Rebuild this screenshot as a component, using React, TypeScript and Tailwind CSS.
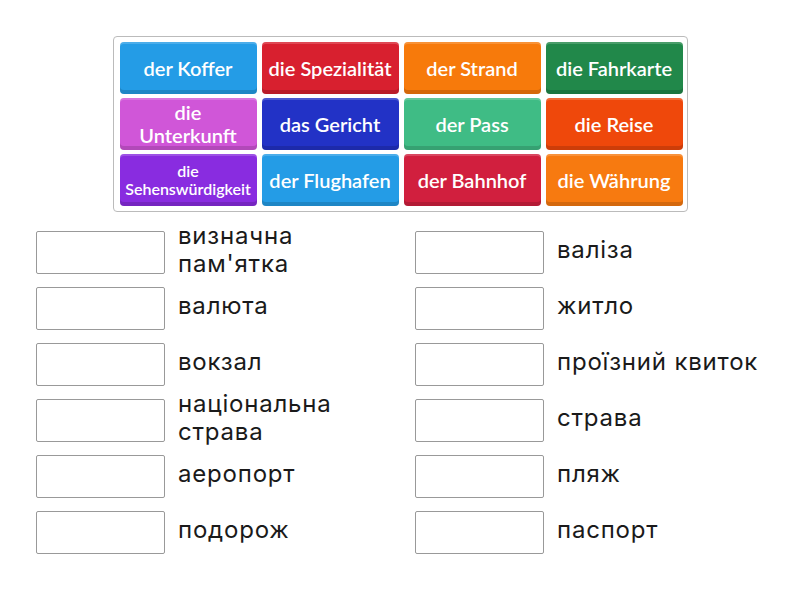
const tiles = [
    { text: "der Koffer", cls: "bg-[#249ce6]" },
    { text: "die Spezialität", cls: "bg-[#d8202f]" },
    { text: "der Strand", cls: "bg-[#f77a0b]" },
    { text: "die Fahrkarte", cls: "bg-[#21884a]" },
    { text: "die Unterkunft", cls: "bg-[#d056d8]", two: true },
    { text: "das Gericht", cls: "bg-[#2232c6]" },
    { text: "der Pass", cls: "bg-[#3fbc85]" },
    { text: "die Reise", cls: "bg-[#ef480b]" },
    { text: "die Sehenswürdigkeit", cls: "bg-[#892ce0]", small: true },
    { text: "der Flughafen", cls: "bg-[#249ce6]" },
    { text: "der Bahnhof", cls: "bg-[#d11f3e]" },
    { text: "die Währung", cls: "bg-[#f77a10]" },
];

const left = ["визначна пам'ятка", "валюта", "вокзал", "національна страва", "аеропорт", "подорож"];
const right = ["валіза", "житло", "проїзний квиток", "страва", "пляж", "паспорт"];

function Tile({ text, cls, two, small }: { text: string; cls: string; two?: boolean; small?: boolean }) {
    return (
        <div
            className={`${cls} h-[52px] rounded-[4px] flex items-center justify-center text-center text-white px-0.5 shadow-[inset_0_-4px_0_rgba(0,0,0,0.14),inset_0_2px_0_rgba(255,255,255,0.18)]`}
        >
            {small ? (
                <span className="text-[16px] leading-[18px] font-semibold">
                    die<br />Sehenswürdigkeit
                </span>
            ) : two ? (
                <span className="text-[20px] leading-[23px] font-semibold">
                    die<br />Unterkunft
                </span>
            ) : (
                <span className="text-[20px] leading-[24px] font-semibold whitespace-nowrap">{text}</span>
            )}
        </div>
    );
}

function Row({ label }: { label: string }) {
    return (
        <div className="flex items-center h-[43px]">
            <div className="w-[129px] h-[43px] border border-[#999] rounded-[2px] bg-white shrink-0" />
            <div className="ml-[13px] text-[24px] leading-[28px] tracking-[0.8px] text-[#1a1a1a] w-[220px] pb-[6px] shrink-0">
                {label}
            </div>
        </div>
    );
}

export default function App() {
    return (
        <div className="w-[800px] h-[600px] bg-white" style={{ fontFamily: "Inter, 'Noto Sans', sans-serif" }}>
            <div className="pt-[36px] flex justify-center">
                <div
                    className="w-[575px] border border-[#bbb] rounded-[4px] pl-[6px] pr-[5px] pt-[5px] pb-[5px] grid grid-cols-[137px_137px_137px_137px] gap-x-[5px] gap-y-[4px]"
                    style={{ fontFamily: "Lato, 'Open Sans', sans-serif" }}
                >
                    {tiles.map((t) => (
                        <Tile key={t.text} {...t} />
                    ))}
                </div>
            </div>
            <div className="mt-[19px] pl-[36px] grid grid-cols-[379px_379px]">
                <div className="flex flex-col gap-[13px]">
                    {left.map((l) => (
                        <Row key={l} label={l} />
                    ))}
                </div>
                <div className="flex flex-col gap-[13px]">
                    {right.map((l) => (
                        <Row key={l} label={l} />
                    ))}
                </div>
            </div>
        </div>
    );
}
